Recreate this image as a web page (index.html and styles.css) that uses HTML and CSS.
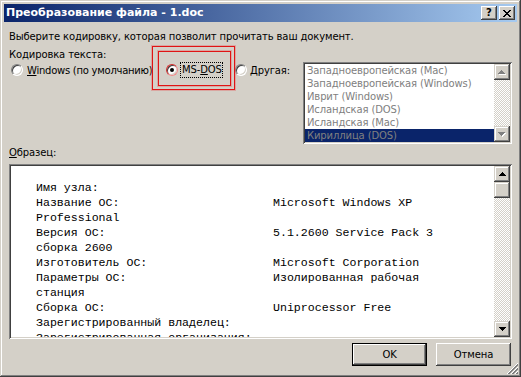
FILE: index.html
```html
<!DOCTYPE html>
<html lang="ru">
<head>
    <meta charset="UTF-8">
    <title>Преобразование файла - 1.doc</title>
    <link rel="stylesheet" href="styles.css">
</head>
<body>
<div class="window">
    <div class="titlebar">
        <span class="title">Преобразование файла - 1.doc</span>
        <div class="title-buttons">
            <div class="tbtn help">?</div>
            <div class="tbtn close">
                <svg width="8" height="7" viewBox="0 0 8 7" shape-rendering="crispEdges"><path fill="#000" d="M0 0h2v1H0zM6 0h2v1H6zM1 1h2v1H1zM5 1h2v1H5zM2 2h4v1H2zM3 3h2v1H3zM2 4h4v1H2zM1 5h2v1H1zM5 5h2v1H5zM0 6h2v1H0zM6 6h2v1H6z"/></svg>
            </div>
        </div>
    </div>

    <div class="content">
        <p class="intro">Выберите кодировку, которая позволит прочитать ваш документ.</p>
        <div class="group-label">Кодировка текста:</div>

        <div class="encoding-row">
            <label class="radio opt-windows"><span class="dot"></span><span class="text"><u>W</u>indows (по умолчанию)</span></label>
            <label class="radio opt-dos"><span class="dot checked"></span><span class="text focus">MS-<u>D</u>OS</span></label>
            <label class="radio opt-other"><span class="dot"></span><span class="text"><u>Д</u>ругая:</span></label>

            <div class="listbox">
                <ul class="list">
                    <li>Западноевропейская (Mac)</li>
                    <li>Западноевропейская (Windows)</li>
                    <li>Иврит (Windows)</li>
                    <li>Исландская (DOS)</li>
                    <li>Исландская (Mac)</li>
                    <li class="selected">Кириллица (DOS)</li>
                </ul>
                <div class="scrollbar disabled">
                    <div class="sb-btn">
                        <svg width="8" height="5" viewBox="0 0 8 5" shape-rendering="crispEdges"><path fill="#fff" d="M4 1h1v1H4zM3 2h3v1H3zM2 3h5v1H2zM1 4h7v1H1z"/><path fill="#808080" d="M3 0h1v1H3zM2 1h3v1H2zM1 2h5v1H1zM0 3h7v1H0z"/></svg>
                    </div>
                    <div class="sb-track"></div>
                    <div class="sb-btn">
                        <svg width="8" height="5" viewBox="0 0 8 5" shape-rendering="crispEdges"><path fill="#fff" d="M1 1h7v1H1zM2 2h5v1H2zM3 3h3v1H3zM4 4h1v1H4z"/><path fill="#808080" d="M0 0h7v1H0zM1 1h5v1H1zM2 2h3v1H2zM3 3h1v1H3z"/></svg>
                    </div>
                </div>
            </div>

            <div class="mark mark-outer"></div>
            <div class="mark mark-inner"></div>
        </div>

        <div class="group-label sample-label"><u>О</u>бразец:</div>

        <div class="sample">
            <div class="sample-text">
                <div class="line"><span>Имя узла:</span></div>
                <div class="line"><span>Название ОС:</span><span>Microsoft Windows XP</span></div>
                <div class="line"><span>Professional</span></div>
                <div class="line"><span>Версия ОС:</span><span>5.1.2600 Service Pack 3</span></div>
                <div class="line"><span>сборка 2600</span></div>
                <div class="line"><span>Изготовитель ОС:</span><span>Microsoft Corporation</span></div>
                <div class="line"><span>Параметры ОС:</span><span>Изолированная рабочая</span></div>
                <div class="line"><span>станция</span></div>
                <div class="line"><span>Сборка ОС:</span><span>Uniprocessor Free</span></div>
                <div class="line"><span>Зарегистрированный владелец:</span></div>
                <div class="line"><span>Зарегистрированная организация:</span></div>
            </div>
            <div class="scrollbar">
                <div class="sb-btn">
                    <svg width="7" height="4" viewBox="0 0 7 4" shape-rendering="crispEdges"><path fill="#000" d="M3 0h1v1H3zM2 1h3v1H2zM1 2h5v1H1zM0 3h7v1H0z"/></svg>
                </div>
                <div class="sb-thumb"></div>
                <div class="sb-track"></div>
                <div class="sb-btn">
                    <svg width="7" height="4" viewBox="0 0 7 4" shape-rendering="crispEdges"><path fill="#000" d="M0 0h7v1H0zM1 1h5v1H1zM2 2h3v1H2zM3 3h1v1H3z"/></svg>
                </div>
            </div>
        </div>

        <div class="actions">
            <div class="btn default">OK</div>
            <div class="btn">Отмена</div>
        </div>
    </div>

    <svg class="grip" width="12" height="12" viewBox="0 0 12 12">
        <path stroke="#fff" d="M12 1L1 12M12 5L5 12M12 9L9 12"/>
        <path stroke="#808080" d="M12 2L2 12M12 3L3 12M12 6L6 12M12 7L7 12M12 10L10 12M12 11L11 12"/>
    </svg>
</div>
</body>
</html>
```

FILE: styles.css
```css
* {
    box-sizing: border-box;
}

body {
    margin: 0;
    background-color: #d4d0c8;
    font-family: "DejaVu Sans", Verdana, sans-serif;
    font-size: 10px;
    color: #000;
}

/* Окно в классическом стиле */
.window {
    position: relative;
    width: 521px;
    height: 377px;
    padding: 4px;
    background-color: #d4d0c8;
    box-shadow: inset -1px -1px #404040, inset 1px 1px #d4d0c8,
                inset -2px -2px #808080, inset 2px 2px #fff;
}

.titlebar {
    display: flex;
    align-items: center;
    height: 18px;
    padding: 0 2px;
    background: linear-gradient(to right, #0a246a, #a6caf0);
}

.title {
    flex: 1;
    color: #fff;
    font-size: 11px;
    font-weight: bold;
    line-height: 18px;
}

.title-buttons {
    display: flex;
    gap: 2px;
}

.tbtn {
    display: flex;
    align-items: center;
    justify-content: center;
    width: 16px;
    height: 14px;
    background-color: #d4d0c8;
    box-shadow: inset -1px -1px #404040, inset 1px 1px #fff,
                inset -2px -2px #808080, inset 2px 2px #d4d0c8;
}

.tbtn.help {
    font-weight: bold;
    line-height: 14px;
    padding-bottom: 1px;
}

.content {
    padding: 0 5px;
    letter-spacing: -0.12px;
}

.intro {
    margin: 8px 0 0;
    line-height: 13px;
}

.group-label {
    margin-top: 5px;
    line-height: 13px;
}

/* Переключатели и список кодировок */
.encoding-row {
    position: relative;
    display: flex;
    align-items: flex-start;
    margin-top: 1px;
}

.radio {
    display: flex;
    align-items: center;
    height: 16px;
    white-space: nowrap;
}

.radio .text {
    line-height: 13px;
}

.dot {
    display: flex;
    align-items: center;
    justify-content: center;
    width: 12px;
    height: 12px;
    border-radius: 50%;
    background-color: #fff;
    border: 1px solid;
    border-color: #808080 #fff #fff #808080;
    box-shadow: inset 1px 1px #404040, inset -1px -1px #d4d0c8;
}

.dot.checked::after {
    content: "";
    width: 4px;
    height: 4px;
    border-radius: 50%;
    background-color: #000;
}

.opt-windows {
    width: 155px;
    margin-left: 2px;
    letter-spacing: -0.25px;
}

.opt-windows .dot {
    margin-right: 4px;
}

.opt-dos {
    width: 69px;
}

.opt-dos .dot {
    margin-right: 2px;
    border-color: #d42a2a #e88 #e88 #d42a2a;
}

.focus {
    width: 43px;
    height: 16px;
    padding: 0 1px;
    border: 1px dotted #000;
    line-height: 14px !important;
    text-align: center;
}

.opt-other .dot {
    margin-right: 3px;
}

.listbox {
    display: flex;
    width: 209px;
    height: 82px;
    margin-left: auto;
    padding: 2px;
    background-color: #fff;
    box-shadow: inset 1px 1px #808080, inset -1px -1px #fff,
                inset 2px 2px #404040, inset -2px -2px #d4d0c8;
}

.list {
    flex: 1;
    margin: 0;
    padding: 0;
    list-style: none;
    color: #808080;
    overflow: hidden;
}

.list li {
    height: 13px;
    line-height: 13px;
    padding-left: 2px;
    white-space: nowrap;
}

.list li.selected {
    background-color: #0a246a;
}

/* Красная рамка выделения */
.mark {
    position: absolute;
    border: 1px solid #e01414;
    box-shadow: 0 0 0 1px rgba(230, 90, 90, 0.35);
}

.mark-outer {
    left: 143px;
    top: -16px;
    width: 83px;
    height: 44px;
}

.mark-inner {
    left: 149px;
    top: -11px;
    width: 73px;
    height: 35px;
}

/* Полоса прокрутки */
.scrollbar {
    display: flex;
    flex-direction: column;
    width: 16px;
}

.sb-btn,
.sb-thumb {
    display: flex;
    align-items: center;
    justify-content: center;
    height: 16px;
    background-color: #d4d0c8;
    box-shadow: inset -1px -1px #404040, inset 1px 1px #d4d0c8,
                inset -2px -2px #808080, inset 2px 2px #fff;
}

.sb-track {
    flex: 1;
    background: repeating-conic-gradient(#d4d0c8 0 25%, #fff 0 50%) 0 0 / 2px 2px;
}

.sample-label {
    margin-top: 2px;
}

.sample {
    display: flex;
    height: 175px;
    margin-top: 5px;
    padding: 2px;
    background-color: #fff;
    box-shadow: inset 1px 1px #808080, inset -1px -1px #fff,
                inset 2px 2px #404040, inset -2px -2px #d4d0c8;
}

.sample-text {
    flex: 1;
    overflow: hidden;
    padding: 14px 0 0 25px;
    font-family: "Liberation Mono", "Courier New", monospace;
    font-size: 11.6px;
    line-height: 15px;
    letter-spacing: 0;
}

.line {
    display: grid;
    grid-template-columns: 237px auto;
    height: 15px;
    white-space: pre;
}

/* Кнопки */
.actions {
    display: flex;
    justify-content: flex-end;
    gap: 9px;
    margin-top: 4px;
    padding-right: 1px;
}

.btn {
    display: flex;
    align-items: center;
    justify-content: center;
    width: 75px;
    height: 23px;
    background-color: #d4d0c8;
    box-shadow: inset -1px -1px #404040, inset 1px 1px #fff,
                inset -2px -2px #808080, inset 2px 2px #d4d0c8;
}

.btn.default {
    border: 1px solid #000;
}

.grip {
    position: absolute;
    right: 3px;
    bottom: 3px;
}
```
